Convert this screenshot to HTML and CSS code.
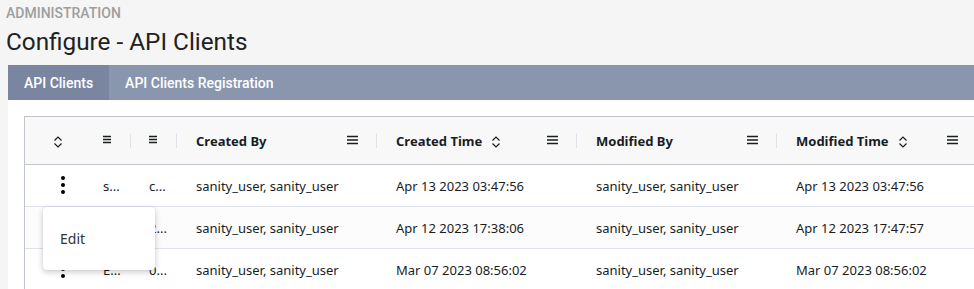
FILE: index.html
```html
<!doctype html>
<html lang="en">
  <head>
    <meta charset="UTF-8" />
    <meta name="viewport" content="width=device-width, initial-scale=1.0" />
    <title>Configure - API Clients</title>
    <link rel="stylesheet" href="styles.css">
  </head>
  <body>
    <div class="page">
      <header class="page-head">
        <div class="crumb">ADMINISTRATION</div>
        <h1>Configure - API Clients</h1>
      </header>

      <nav class="tabs">
        <a class="tab active">API Clients</a>
        <a class="tab">API Clients Registration</a>
      </nav>

      <section class="panel">
        <div class="grid">
          <!-- header row -->
          <div class="hcell hcell-first">
            <svg class="sort" width="10" height="14" viewBox="0 0 10 14"><path d="M1.5 5.5 L5 2 L8.5 5.5 M1.5 8.5 L5 12 L8.5 8.5" /></svg>
          </div>
          <div class="hcell hcell-narrow sep">
            <svg class="menu small" width="8" height="9" viewBox="0 0 8 9"><path d="M0 1.5H8M0 4.5H8M0 7.5H8" /></svg>
          </div>
          <div class="hcell hcell-narrow sep">
            <svg class="menu small" width="8" height="9" viewBox="0 0 8 9"><path d="M0 1.5H8M0 4.5H8M0 7.5H8" /></svg>
          </div>
          <div class="hcell sep">
            <span class="hlabel">Created By</span>
            <svg class="menu" width="11" height="10" viewBox="0 0 11 10"><path d="M0 1.5H11M0 5H11M0 8.5H11" /></svg>
          </div>
          <div class="hcell sep">
            <span class="hlabel">Created Time</span>
            <svg class="sort" width="10" height="14" viewBox="0 0 10 14"><path d="M1.5 5.5 L5 2 L8.5 5.5 M1.5 8.5 L5 12 L8.5 8.5" /></svg>
            <svg class="menu" width="11" height="10" viewBox="0 0 11 10"><path d="M0 1.5H11M0 5H11M0 8.5H11" /></svg>
          </div>
          <div class="hcell sep">
            <span class="hlabel">Modified By</span>
            <svg class="menu" width="11" height="10" viewBox="0 0 11 10"><path d="M0 1.5H11M0 5H11M0 8.5H11" /></svg>
          </div>
          <div class="hcell">
            <span class="hlabel">Modified Time</span>
            <svg class="sort" width="10" height="14" viewBox="0 0 10 14"><path d="M1.5 5.5 L5 2 L8.5 5.5 M1.5 8.5 L5 12 L8.5 8.5" /></svg>
            <svg class="menu" width="11" height="10" viewBox="0 0 11 10"><path d="M0 1.5H11M0 5H11M0 8.5H11" /></svg>
          </div>

          <!-- row 1 -->
          <div class="cell cell-first"><span class="kebab"><i></i><i></i><i></i></span></div>
          <div class="cell cell-narrow">s...</div>
          <div class="cell cell-narrow">c...</div>
          <div class="cell">sanity_user, sanity_user</div>
          <div class="cell">Apr 13 2023 03:47:56</div>
          <div class="cell">sanity_user, sanity_user</div>
          <div class="cell">Apr 13 2023 03:47:56</div>

          <!-- row 2 -->
          <div class="cell odd cell-first"><span class="kebab"><i></i><i></i><i></i></span></div>
          <div class="cell odd cell-narrow">a...</div>
          <div class="cell odd cell-narrow">2...</div>
          <div class="cell odd">sanity_user, sanity_user</div>
          <div class="cell odd">Apr 12 2023 17:38:06</div>
          <div class="cell odd">sanity_user, sanity_user</div>
          <div class="cell odd">Apr 12 2023 17:47:57</div>

          <!-- row 3 -->
          <div class="cell cell-first"><span class="kebab"><i></i><i></i><i></i></span></div>
          <div class="cell cell-narrow">E...</div>
          <div class="cell cell-narrow">0...</div>
          <div class="cell">sanity_user, sanity_user</div>
          <div class="cell">Mar 07 2023 08:56:02</div>
          <div class="cell">sanity_user, sanity_user</div>
          <div class="cell">Mar 07 2023 08:56:02</div>
        </div>

        <!-- row action menu (open) -->
        <div class="row-menu">
          <div class="row-menu-item">Edit</div>
        </div>
      </section>
    </div>
  </body>
</html>
```

FILE: styles.css
```css
body {
  margin: 0;
  padding: 0;
  font-family: Roboto, "Liberation Sans", sans-serif;
  background-color: #f5f5f5;
  overflow: hidden;
}

.page {
  padding-left: 8px;
}

.page-head {
  padding-top: 4px;
  height: 61px;
}

.crumb {
  font-size: 14px;
  font-weight: 500;
  color: #9e9e9e;
  line-height: 18px;
  margin-left: -2px;
}

.page-head h1 {
  margin: 6px 0 0 -2px;
  font-size: 24.3px;
  font-weight: 400;
  line-height: 28px;
  color: #212121;
}

/* Tabs */
.tabs {
  display: flex;
  height: 35px;
  background-color: #8996ae;
}

.tab {
  display: flex;
  align-items: center;
  padding: 0 16px;
  font-size: 14px;
  font-weight: 500;
  color: #ffffff;
}

.tab.active {
  background-color: #7a86a0;
}

/* Panel */
.panel {
  position: relative;
  background-color: #ffffff;
  padding: 16px 0 0 16px;
  height: 173px;
  overflow: hidden;
}

.grid {
  display: grid;
  grid-template-columns: 60px 46px 46px 200px 200px 200px 200px;
  grid-template-rows: 48px 42px 42px 42px;
  width: 960px;
  border-top: 1px solid #bfc4cd;
  border-left: 1px solid #bfc4cd;
  font-family: "Noto Sans", "Open Sans", sans-serif;
  font-size: 13px;
  color: #181d1f;
}

.hcell {
  position: relative;
  display: flex;
  align-items: center;
  padding: 1px 19px 0;
  background-color: #f8f8f8;
  border-bottom: 1px solid #bfc4cd;
}

.hcell.sep::after {
  content: '';
  position: absolute;
  right: -1px;
  top: 17px;
  width: 2px;
  height: 14px;
  background-color: #dde2eb;
}

.hcell-first {
  padding-left: 28px;
}

.hcell-narrow {
  padding: 0 0 0 18px;
}

.hlabel {
  font-weight: 700;
  white-space: nowrap;
}

.hcell .sort {
  margin-left: 9px;
  margin-top: 1px;
}

.hcell-first .sort {
  margin-left: 0;
}

.hcell .menu {
  margin-left: auto;
  margin-top: -2px;
}

.hcell-narrow .menu {
  margin-left: 0;
}

.sort path,
.menu path {
  fill: none;
  stroke: #181d1f;
  stroke-width: 1.2;
}

.menu path {
  stroke-width: 1.4;
}

.cell {
  display: flex;
  align-items: center;
  padding: 1px 19px 0;
  white-space: nowrap;
  overflow: hidden;
  border-bottom: 1px solid #dde2eb;
  background-color: #ffffff;
}

.cell.odd {
  background-color: #fcfcfc;
}

.cell-narrow {
  padding: 1px 0 0 18px;
}

.cell-first {
  padding-left: 36px;
}

.kebab {
  display: flex;
  flex-direction: column;
  gap: 3px;
  margin-top: -3px;
}

.kebab i {
  display: block;
  width: 4px;
  height: 4px;
  border-radius: 50%;
  background-color: #000000;
}

/* Row action menu */
.row-menu {
  position: absolute;
  left: 35px;
  top: 107px;
  width: 112px;
  height: 63px;
  background-color: #ffffff;
  border-radius: 4px;
  box-shadow: 0 2px 6px rgba(0, 0, 0, 0.22), 0 0 1px rgba(0, 0, 0, 0.12);
}

.row-menu-item {
  padding: 22px 0 0 17px;
  font-family: "Noto Sans", "Open Sans", sans-serif;
  font-size: 14px;
  color: #333333;
}
```
